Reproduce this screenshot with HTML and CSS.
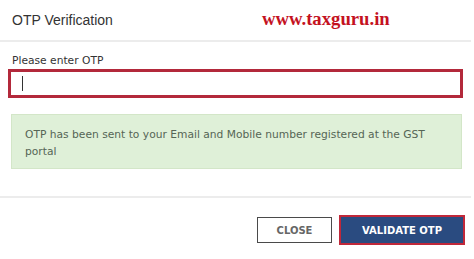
FILE: index.html
```html
<!DOCTYPE html>
<html>
<head>
<meta charset="utf-8">
<link rel="stylesheet" href="styles.css">
</head>
<body>
<div class="modal">
  <div class="header">
    <div class="title">OTP Verification</div>
    <div class="brand">www.taxguru.in</div>
  </div>
  <div class="content">
    <div class="label">Please enter OTP</div>
    <div class="input"><span class="caret"></span></div>
    <div class="alert">OTP has been sent to your Email and Mobile number registered at the GST portal</div>
  </div>
  <div class="footer">
    <button class="btn close">CLOSE</button>
    <button class="btn validate">VALIDATE OTP</button>
  </div>
</div>
</body>
</html>
```
FILE: styles.css
```css
html, body {
  margin: 0;
  padding: 0;
  background: #ffffff;
}
.modal {
  width: 471px;
}
.header {
  height: 40px;
  display: flex;
  align-items: center;
  padding-left: 12px;
  border-bottom: 2px solid #ececec;
}
.title {
  font-family: "Liberation Sans", Arial, sans-serif;
  font-size: 14px;
  color: #333333;
  width: 250px;
  margin-top: -1px;
}
.brand {
  font-family: "Liberation Serif", "Times New Roman", serif;
  font-weight: bold;
  font-size: 18.7px;
  color: #c4121f;
  margin-top: -2px;
}
.content {
  padding: 12px 8px 0 8px;
  font-family: "DejaVu Sans", Verdana, sans-serif;
}
.label {
  font-size: 10.7px;
  line-height: 14px;
  color: #333333;
  padding-left: 4px;
}
.input {
  margin-top: 1px;
  height: 23px;
  border: 3px solid #b3293b;
  display: flex;
  align-items: center;
  padding-left: 11px;
}
.caret {
  width: 1px;
  height: 15px;
  background: #333333;
}
.alert {
  margin: 16px 1px 0 3px;
  background: #dff0d8;
  border: 1px solid #d3e6c8;
  padding: 11px 13px 8px 13px;
  font-size: 10.7px;
  line-height: 17px;
  color: #556555;
}
.footer {
  margin-top: 27px;
  border-top: 2px solid #ececec;
  padding: 17px 6px 0 0;
  display: flex;
  justify-content: flex-end;
  align-items: center;
  gap: 7px;
}
.btn {
  font-family: "DejaVu Sans", Verdana, sans-serif;
  font-weight: bold;
  font-size: 10px;
  padding: 0;
  margin: 0;
}
.close {
  width: 75px;
  height: 26px;
  background: #ffffff;
  border: 1px solid #4a4a4a;
  color: #666666;
}
.validate {
  width: 126px;
  height: 30px;
  background: #2a4b80;
  border: 2px solid #c0283a;
  color: #ffffff;
}
```
